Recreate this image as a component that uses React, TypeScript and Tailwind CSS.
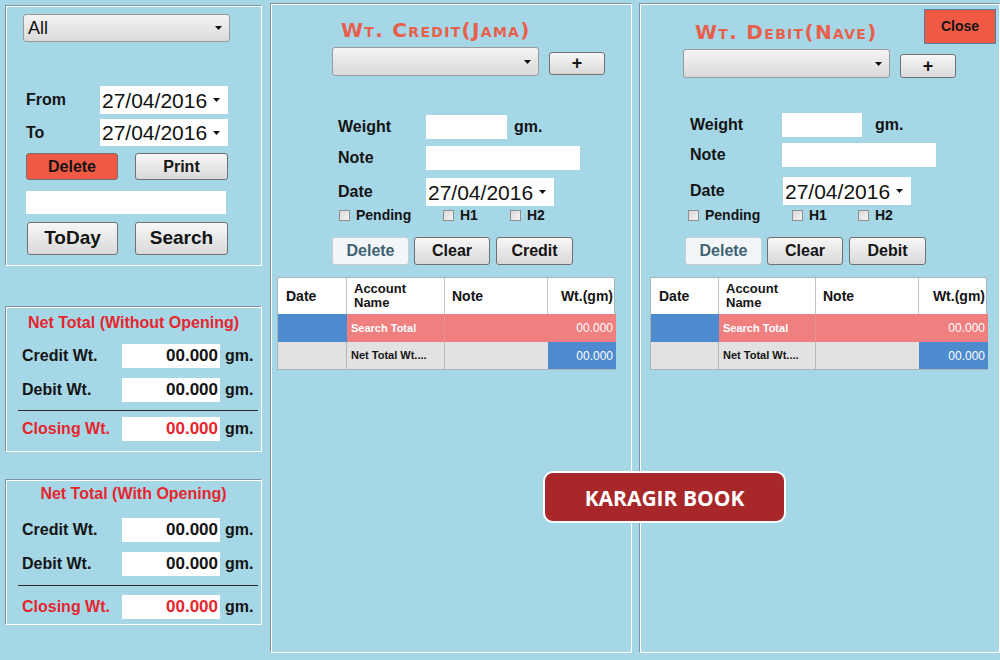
import React from "react";

const gb =
  "border border-t-[#7d95a0] border-l-[#7d95a0] border-r-white border-b-white shadow-[inset_1px_1px_0_#ffffff]";

function Caret({ className = "" }: { className?: string }) {
  return (
    <svg width="7" height="4" viewBox="0 0 7 4" className={className}>
      <path d="M0 0 H7 L3.5 4 Z" fill="#111" />
    </svg>
  );
}

function Combo({ className = "", text = "" }: { className?: string; text?: string }) {
  return (
    <div
      className={`flex items-center justify-between border border-[#9a9a9a] rounded-[3px] bg-linear-to-b from-[#f4f4f4] to-[#dadada] pl-[4px] pr-[7px] text-[18px] text-[#111] ${className}`}
    >
      <span>{text}</span>
      <Caret />
    </div>
  );
}

function Btn({ className = "", children }: { className?: string; children?: React.ReactNode }) {
  return (
    <div
      className={`flex items-center justify-center border border-[#707070] rounded-[3px] bg-linear-to-b from-[#f7f7f7] to-[#d9d9d9] font-bold text-[#141414] ${className}`}
    >
      {children}
    </div>
  );
}

function DateBox({ className = "" }: { className?: string }) {
  return (
    <div className={`bg-white flex items-center pl-[2px] text-[21px] leading-none text-[#111] ${className}`}>
      <span>27/04/2016</span>
      <Caret className="ml-[6px]" />
    </div>
  );
}

function Check({ label, className = "" }: { label: string; className?: string }) {
  return (
    <div className={`flex items-center ${className}`}>
      <div className="w-[11px] h-[11px] border border-[#8e8e8e] bg-linear-to-br from-[#d8d8d8] to-[#f4f4f4]" />
      <span className="ml-[6px] text-[14px] font-bold text-[#141414] leading-none">{label}</span>
    </div>
  );
}

function TotalRow({
  label,
  red = false,
  className = "",
}: {
  label: string;
  red?: boolean;
  className?: string;
}) {
  return (
    <div className={`flex items-center ml-[16px] ${className}`}>
      <span className={`w-[100px] text-[16px] font-bold ${red ? "text-[#e5262e]" : "text-[#141414]"}`}>{label}</span>
      <div
        className={`w-[98px] h-[24px] bg-white flex items-center justify-end pr-[2px] text-[17px] font-bold ${
          red ? "text-[#e5262e]" : "text-[#141414]"
        }`}
      >
        00.000
      </div>
      <span className="ml-[5px] text-[16px] font-bold text-[#141414]">gm.</span>
    </div>
  );
}

function TotalBox({ title, className = "", gaps }: { title: string; className?: string; gaps: string[] }) {
  return (
    <div className={`${gb} w-[257px] h-[146px] flex flex-col ${className}`}>
      <div className={`text-center text-[16px] leading-[20px] font-bold text-[#e5262e] ${gaps[0]}`}>{title}</div>
      <TotalRow label="Credit Wt." className={gaps[1]} />
      <TotalRow label="Debit Wt." className={gaps[2]} />
      <div className={`ml-[12px] w-[240px] h-[1px] bg-[#2b2b2b] ${gaps[3]}`} />
      <TotalRow label="Closing Wt." red className={gaps[4]} />
    </div>
  );
}

function Table({ widths, className = "" }: { widths: number[]; className?: string }) {
  const cell = "border-r border-[#c4c4c4] last:border-r-0 shrink-0";
  return (
    <div className={`border border-[#a9b4b8] flex flex-col ${className}`}>
      <div className="flex h-[36px] bg-white">
        <div className={`${cell} flex items-center pl-[8px] text-[14px] font-bold text-[#141414]`} style={{ width: widths[0] }}>
          Date
        </div>
        <div
          className={`${cell} flex items-center pl-[7px] text-[13px] leading-[14px] font-bold text-[#141414]`}
          style={{ width: widths[1] }}
        >
          Account
          <br />
          Name
        </div>
        <div className={`${cell} flex items-center pl-[7px] text-[14px] font-bold text-[#141414]`} style={{ width: widths[2] }}>
          Note
        </div>
        <div
          className={`${cell} flex items-center justify-end pr-[3px] text-[14px] font-bold text-[#141414]`}
          style={{ width: widths[3] }}
        >
          Wt.(gm)
        </div>
      </div>
      <div className="flex h-[28px]">
        <div className="bg-[#4d8ace] shrink-0" style={{ width: widths[0] }} />
        <div
          className="bg-[#f07f7f] border-r border-[#e89090] shrink-0 flex items-center pl-[4px] text-[11px] font-bold text-white"
          style={{ width: widths[1] }}
        >
          Search Total
        </div>
        <div className="bg-[#f07f7f] shrink-0" style={{ width: widths[2] }} />
        <div
          className="bg-[#f07f7f] shrink-0 flex items-center justify-end pr-[3px] text-[12px] text-white"
          style={{ width: widths[3] }}
        >
          00.000
        </div>
      </div>
      <div className="flex h-[27px]">
        <div className="bg-[#e2e2e2] border-r border-[#b8b8b8] shrink-0" style={{ width: widths[0] }} />
        <div
          className="bg-[#e2e2e2] border-r border-[#b8b8b8] shrink-0 flex items-center pl-[4px] text-[11px] font-bold text-[#141414]"
          style={{ width: widths[1] }}
        >
          Net Total Wt....
        </div>
        <div className="bg-[#e2e2e2] shrink-0" style={{ width: widths[2] }} />
        <div
          className="bg-[#4d8ace] shrink-0 flex items-center justify-end pr-[3px] text-[12px] text-white"
          style={{ width: widths[3] }}
        >
          00.000
        </div>
      </div>
    </div>
  );
}

const titleCls =
  "text-[20px] leading-[20px] font-bold text-[#e8604c] [font-variant:small-caps] tracking-[1.3px] whitespace-nowrap [font-family:'DejaVu_Sans',sans-serif]";

export default function App() {
  return (
    <div
      className="relative w-[1000px] h-[660px] bg-[#a6d7e7] flex overflow-hidden"
      style={{ fontFamily: '"Liberation Sans", Arial, sans-serif' }}
    >
      {/* Left column */}
      <div className="w-[270px] shrink-0 flex flex-col pl-[5px] pt-[5px]">
        <div className={`${gb} w-[257px] h-[261px] flex flex-col`}>
          <Combo className="ml-[17px] mt-[8px] w-[207px] h-[28px]" text="All" />
          <div className="flex items-center mt-[44px] ml-[20px]">
            <span className="w-[74px] text-[16px] font-bold text-[#141414]">From</span>
            <DateBox className="w-[128px] h-[28px]" />
          </div>
          <div className="flex items-center mt-[5px] ml-[20px]">
            <span className="w-[74px] text-[16px] font-bold text-[#141414]">To</span>
            <DateBox className="w-[128px] h-[27px]" />
          </div>
          <div className="flex mt-[7px] ml-[20px] gap-[17px]">
            <Btn className="w-[92px] h-[27px] text-[16px] !bg-none !bg-[#f05a44] border-[#8a5a50]">Delete</Btn>
            <Btn className="w-[93px] h-[27px] text-[16px]">Print</Btn>
          </div>
          <div className="mt-[11px] ml-[20px] w-[200px] h-[23px] bg-white" />
          <div className="flex mt-[8px] ml-[21px] gap-[17px]">
            <Btn className="w-[91px] h-[33px] text-[19px]">ToDay</Btn>
            <Btn className="w-[93px] h-[33px] text-[19px]">Search</Btn>
          </div>
        </div>
        <TotalBox
          title="Net Total (Without Opening)"
          className="mt-[40px]"
          gaps={["mt-[6px]", "mt-[11px]", "mt-[10px]", "mt-[8px]", "mt-[6px]"]}
        />
        <TotalBox
          title="Net Total (With Opening)"
          className="mt-[27px]"
          gaps={["mt-[4px]", "mt-[14px]", "mt-[10px]", "mt-[9px]", "mt-[9px]"]}
        />
      </div>

      {/* Middle panel */}
      <div className={`${gb} mt-[3px] w-[362px] h-[650px] shrink-0 flex flex-col`}>
        <div className={`${titleCls} mt-[16px] ml-[70px]`}>Wt. Credit(Jama)</div>
        <div className="flex items-start mt-[7px] ml-[61px]">
          <Combo className="w-[207px] h-[29px]" />
          <Btn className="ml-[10px] mt-[5px] w-[56px] h-[23px] text-[18px]">+</Btn>
        </div>
        <div className="flex items-center mt-[39px] ml-[67px]">
          <span className="w-[88px] text-[16px] font-bold text-[#141414]">Weight</span>
          <div className="w-[81px] h-[24px] bg-white" />
          <span className="ml-[7px] text-[16px] font-bold text-[#141414]">gm.</span>
        </div>
        <div className="flex items-center mt-[7px] ml-[67px]">
          <span className="w-[88px] text-[16px] font-bold text-[#141414]">Note</span>
          <div className="w-[154px] h-[24px] bg-white" />
        </div>
        <div className="flex items-center mt-[8px] ml-[67px]">
          <span className="w-[88px] text-[16px] font-bold text-[#141414]">Date</span>
          <DateBox className="w-[128px] h-[28px]" />
        </div>
        <div className="flex items-center mt-[3px] ml-[68px] h-[12px]">
          <Check label="Pending" className="w-[104px]" />
          <Check label="H1" className="w-[67px]" />
          <Check label="H2" />
        </div>
        <div className="flex mt-[16px] ml-[61px]">
          <Btn className="w-[77px] h-[28px] text-[16px] !bg-none !bg-[#f3f6f8] !border-[#c8d0d4] !text-[#3f6273] !font-bold">
            Delete
          </Btn>
          <Btn className="ml-[5px] w-[76px] h-[28px] text-[16px]">Clear</Btn>
          <Btn className="ml-[6px] w-[77px] h-[28px] text-[16px]">Credit</Btn>
        </div>
        <Table widths={[69, 98, 103, 68]} className="mt-[12px] ml-[6px] w-[338px]" />
      </div>

      {/* Right panel */}
      <div className={`${gb} mt-[3px] ml-[7px] w-[361px] h-[650px] shrink-0 flex flex-col`}>
        <div className="flex items-start">
          <div className={`${titleCls} mt-[18px] ml-[55px]`}>Wt. Debit(Nave)</div>
          <div className="ml-auto mr-[3px] mt-[5px] w-[72px] h-[35px] bg-[#f05a44] border border-[#4f7fa3] flex items-center justify-center text-[14px] font-bold text-[#141414]">
            Close
          </div>
        </div>
        <div className="flex items-start mt-[5px] ml-[43px]">
          <Combo className="w-[207px] h-[29px]" />
          <Btn className="ml-[10px] mt-[5px] w-[56px] h-[24px] text-[18px]">+</Btn>
        </div>
        <div className="flex items-center mt-[35px] ml-[50px]">
          <span className="w-[92px] text-[16px] font-bold text-[#141414]">Weight</span>
          <div className="w-[80px] h-[24px] bg-white" />
          <span className="ml-[13px] text-[16px] font-bold text-[#141414]">gm.</span>
        </div>
        <div className="flex items-center mt-[6px] ml-[50px]">
          <span className="w-[92px] text-[16px] font-bold text-[#141414]">Note</span>
          <div className="w-[154px] h-[24px] bg-white" />
        </div>
        <div className="flex items-center mt-[10px] ml-[50px]">
          <span className="w-[93px] text-[16px] font-bold text-[#141414]">Date</span>
          <DateBox className="w-[128px] h-[28px]" />
        </div>
        <div className="flex items-center mt-[4px] ml-[48px] h-[12px]">
          <Check label="Pending" className="w-[104px]" />
          <Check label="H1" className="w-[66px]" />
          <Check label="H2" />
        </div>
        <div className="flex mt-[16px] ml-[45px]">
          <Btn className="w-[77px] h-[28px] text-[16px] !bg-none !bg-[#f3f6f8] !border-[#c8d0d4] !text-[#3f6273]">
            Delete
          </Btn>
          <Btn className="ml-[5px] w-[76px] h-[28px] text-[16px]">Clear</Btn>
          <Btn className="ml-[6px] w-[77px] h-[28px] text-[16px]">Debit</Btn>
        </div>
        <Table widths={[68, 97, 103, 69]} className="mt-[12px] ml-[10px] w-[337px]" />
      </div>

      {/* Badge */}
      <div
        className="absolute left-[543px] top-[471px] w-[243px] h-[52px] bg-[#a8282a] border-2 border-white rounded-[10px] flex items-center justify-center pt-[4px] text-white text-[21px] font-bold"
        style={{ fontFamily: '"Open Sans", "Liberation Sans", sans-serif' }}
      >
        KARAGIR BOOK
      </div>
    </div>
  );
}
